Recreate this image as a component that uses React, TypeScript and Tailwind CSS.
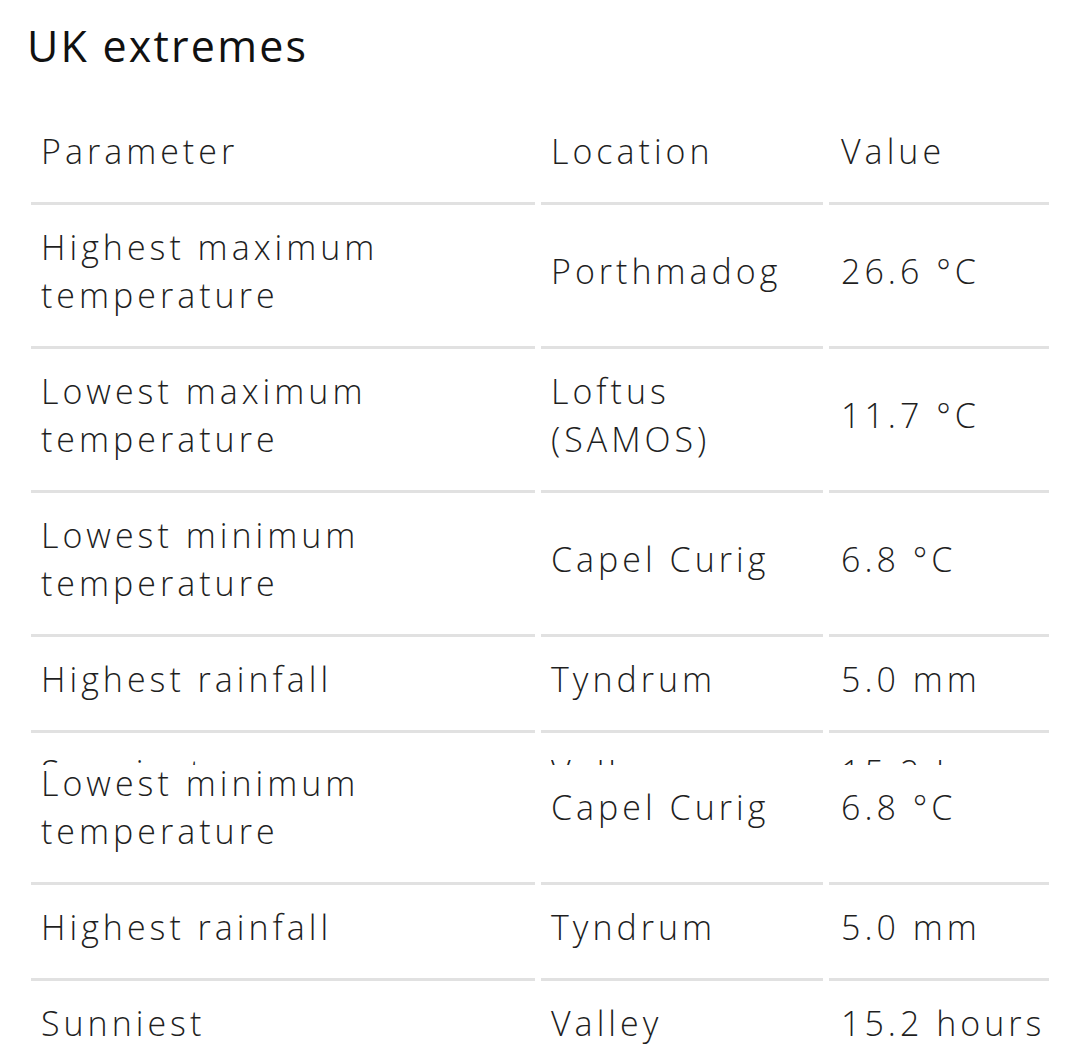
import React from "react";

type Row = { param: string[]; location: string[]; value: string };

const rows: Row[] = [
  { param: ["Highest maximum", "temperature"], location: ["Porthmadog"], value: "26.6 °C" },
  { param: ["Lowest maximum", "temperature"], location: ["Loftus", "(SAMOS)"], value: "11.7 °C" },
  { param: ["Lowest minimum", "temperature"], location: ["Capel Curig"], value: "6.8 °C" },
  { param: ["Highest rainfall"], location: ["Tyndrum"], value: "5.0 mm" },
];

const repeated: Row[] = [
  { param: ["Lowest minimum", "temperature"], location: ["Capel Curig"], value: "6.8 °C" },
  { param: ["Highest rainfall"], location: ["Tyndrum"], value: "5.0 mm" },
  { param: ["Sunniest"], location: ["Valley"], value: "15.2 hours" },
];

const base = "align-middle border-b-[3px] border-[#e1e1e1]";
const pad = "pt-[18px] pb-[27px]";
const col1 = "pl-[10px] pr-[10px]";
const col2 = "pl-[10px] pr-[10px]";
const col3 = "pl-[12px] pr-0 whitespace-nowrap";

function Lines({ lines }: { lines: string[] }) {
  return (
    <>
      {lines.map((l, i) => (
        <div key={i}>{l}</div>
      ))}
    </>
  );
}

// tops of the row that got painted underneath the repeated rows
function Sliver({ text, left }: { text: string; left: string }) {
  return (
    <div className={`absolute ${left} top-[27px] h-[5px] overflow-hidden`}>
      <div className="-mt-[12px] whitespace-nowrap">{text}</div>
    </div>
  );
}

export default function App() {
  return (
    <div
      className="bg-white min-h-screen text-[#1f1f1f] pt-[18px]"
      style={{ fontFamily: '"Open Sans", "Noto Sans", sans-serif' }}
    >
      <h2 className="ml-[27px] text-[43px] leading-[56px] font-medium tracking-[2.2px] text-[#111]">
        UK extremes
      </h2>

      <table className="table-fixed w-[1030px] ml-[25px] mt-[35px] border-separate border-spacing-x-[6px] border-spacing-y-0 text-[34px] leading-[48px] font-light tracking-[4px]">
        <colgroup>
          <col className="w-[504px]" />
          <col className="w-[282px]" />
          <col className="w-[220px]" />
        </colgroup>
        <thead>
          <tr className="text-left">
            <th className={`${base} ${pad} ${col1} font-light`}>Parameter</th>
            <th className={`${base} ${pad} ${col2} font-light`}>Location</th>
            <th className={`${base} ${pad} ${col3} font-light`}>Value</th>
          </tr>
        </thead>
        <tbody>
          {rows.map((r, i) => (
            <tr key={i}>
              <td className={`${base} ${pad} ${col1}`}>
                <Lines lines={r.param} />
              </td>
              <td className={`${base} ${pad} ${col2}`}>
                <Lines lines={r.location} />
              </td>
              <td className={`${base} ${pad} ${col3}`}>{r.value}</td>
            </tr>
          ))}
          {repeated.map((r, i) => {
            const glitch = i === 0;
            const p = glitch ? "relative pt-[26px] pb-[27px]" : pad;
            return (
              <tr key={`r${i}`}>
                <td className={`${base} ${p} ${col1}`}>
                  {glitch && <Sliver text="Sunniest" left="left-[10px]" />}
                  <Lines lines={r.param} />
                </td>
                <td className={`${base} ${p} ${col2}`}>
                  {glitch && <Sliver text="Valley" left="left-[10px]" />}
                  <Lines lines={r.location} />
                </td>
                <td className={`${base} ${p} ${col3}`}>
                  {glitch && <Sliver text="15.2 hours" left="left-[12px]" />}
                  {r.value}
                </td>
              </tr>
            );
          })}
        </tbody>
      </table>
    </div>
  );
}
